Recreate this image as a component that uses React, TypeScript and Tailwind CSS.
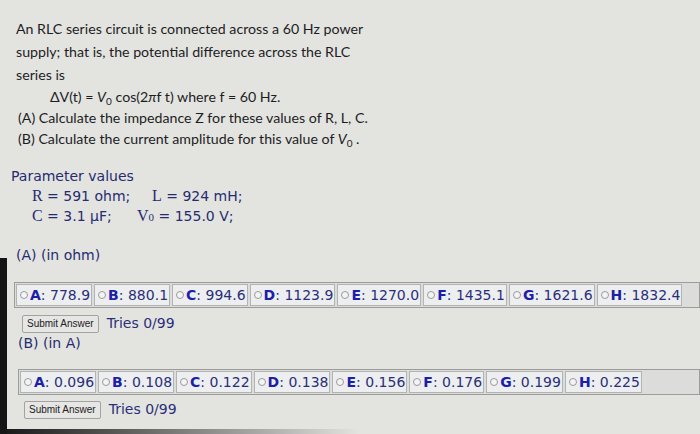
import React from "react";

const optsA = [
  ["A", "778.9"],
  ["B", "880.1"],
  ["C", "994.6"],
  ["D", "1123.9"],
  ["E", "1270.0"],
  ["F", "1435.1"],
  ["G", "1621.6"],
  ["H", "1832.4"],
];

const optsB = [
  ["A", "0.096"],
  ["B", "0.108"],
  ["C", "0.122"],
  ["D", "0.138"],
  ["E", "0.156"],
  ["F", "0.176"],
  ["G", "0.199"],
  ["H", "0.225"],
];

function Choices({ items }: { items: string[][] }) {
  return (
    <div className="inline-flex gap-[2px] border border-[#9c9d9a] bg-[#dcdddb] p-[1px]">
      {items.map(([k, v]) => (
        <label
          key={k}
          className="flex h-[22px] items-center border border-[#b3b4b1] bg-[#eceef0] pl-[3px] pr-[1px] text-[14px] text-[#2b2f78]"
        >
          <span className="mr-[2px] inline-block h-[8px] w-[8px] rounded-full border border-[#9a9a9a] bg-[#f4f4f4]" />
          <span className="font-bold text-[#1c20a6]">{k}</span>
          <span>: {v}</span>
        </label>
      ))}
    </div>
  );
}

function Submit() {
  return (
    <div className="flex items-center gap-[8px]">
      <button className="h-[18px] rounded-[2px] border border-[#a2a2a0] bg-[#e6e6e4] px-[4px] font-['Liberation_Sans',sans-serif] text-[10px] leading-none text-[#222]">
        Submit Answer
      </button>
      <span className="text-[14px] text-[#2b2f78]">Tries 0/99</span>
    </div>
  );
}

export default function App() {
  return (
    <div className="relative h-[434px] w-[700px] overflow-hidden bg-[#e3e4e0] font-['DejaVu_Sans',sans-serif]">
      <div className="pl-[16px] pt-[17px] font-['Lato',sans-serif] text-[14.2px] leading-[23px] text-[#1d1d1f]">
        <p>
          An RLC series circuit is connected across a 60 Hz power
          <br />
          supply; that is, the potential difference across the RLC
          <br />
          series is
        </p>
        <p className="pl-[34px] leading-[21px]">
          ΔV(t) = <i>V</i>
          <sub className="text-[10px]">0</sub> cos(2<i>π</i>f t) where f = 60 Hz.
        </p>
        <p className="pl-[2px] leading-[21px]">(A) Calculate the impedance Z for these values of R, L, C.</p>
        <p className="pl-[2px] leading-[21px]">
          (B) Calculate the current amplitude for this value of <i>V</i>
          <sub className="text-[10px]">0</sub> .
        </p>
      </div>

      <div className="pl-[11px] pt-[18px] text-[14px] leading-[19px] text-[#262b70]">
        <div>Parameter values</div>
        <div className="grid grid-cols-[120px_auto] pl-[21px]">
          <div>
            <span className="font-['Liberation_Serif',serif] text-[16px]">R</span> = 591 ohm;
          </div>
          <div>
            <span className="font-['Liberation_Serif',serif] text-[16px]">L</span> = 924 mH;
          </div>
          <div>
            <span className="font-['Liberation_Serif',serif] text-[16px]">C</span> = 3.1 μF;
          </div>
          <div className="-ml-[15px]">
            <span className="font-['Liberation_Serif',serif] text-[16px]">V</span>
            <span className="font-['Liberation_Serif',serif] text-[11px]">0</span> = 155.0 V;
          </div>
        </div>
      </div>

      <div className="pl-[16px] pt-[18px] text-[14px] text-[#262b70]">(A) (in ohm)</div>

      <div className="flex flex-col gap-[5px] pl-[14px] pt-[16px]">
        <Choices items={optsA} />
        <div className="pl-[8px]">
          <Submit />
        </div>
      </div>
      <div className="pl-[18px] text-[14px] leading-[18px] text-[#262b70]">(B) (in A)</div>

      <div className="flex flex-col gap-[4px] pl-[18px] pt-[17px]">
        <Choices items={optsB} />
        <div className="pl-[6px]">
          <Submit />
        </div>
      </div>

      <div className="absolute bottom-0 left-0 top-[258px] w-[7px] bg-[#141414]" />
      <div className="absolute bottom-0 left-0 h-[5px] w-[360px] bg-gradient-to-r from-[#161616] to-transparent" />
    </div>
  );
}
